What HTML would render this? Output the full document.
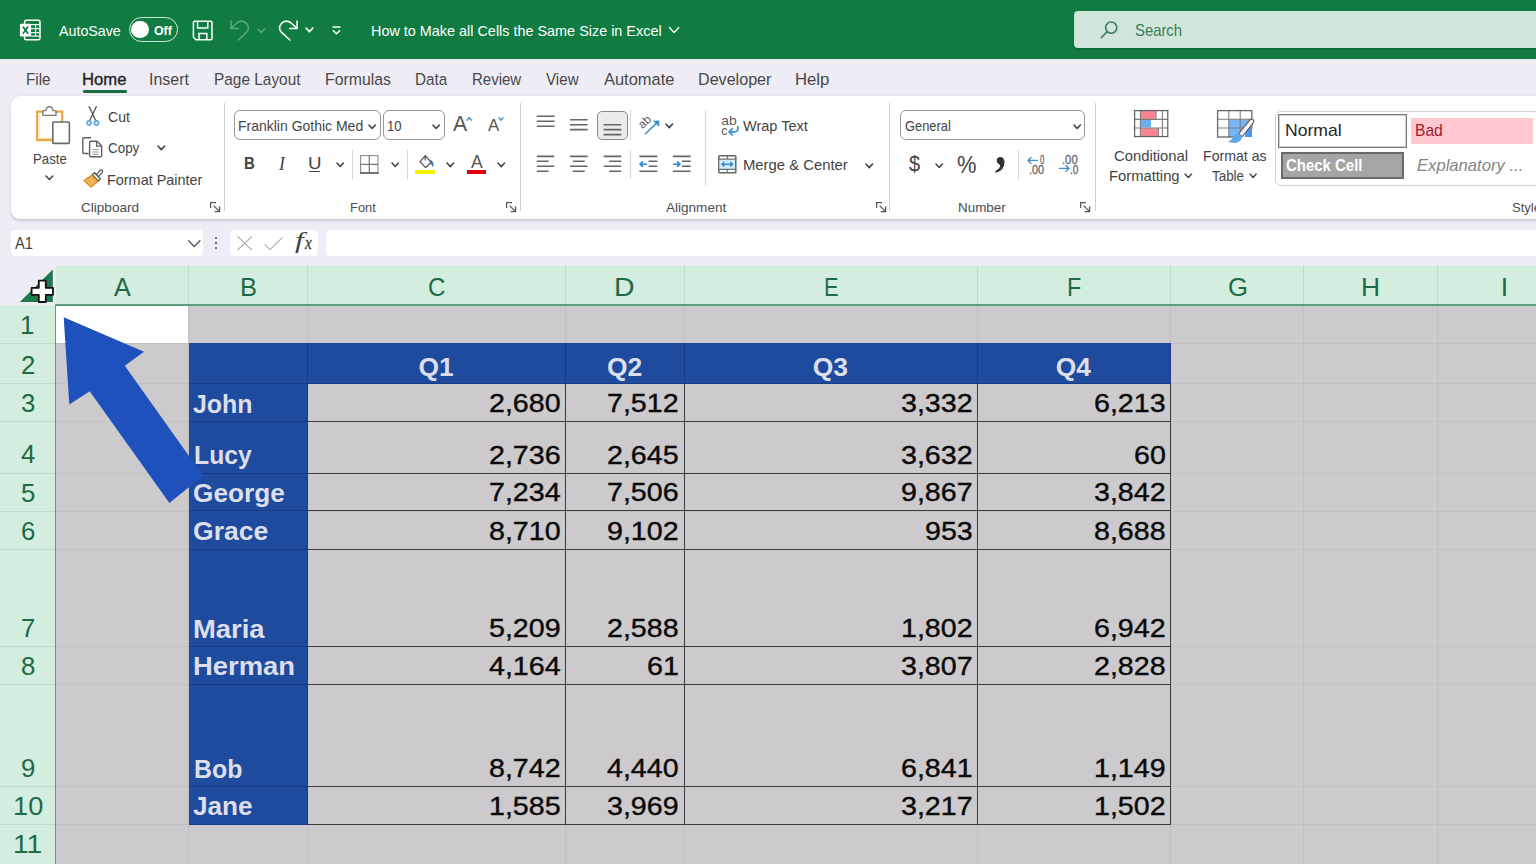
<!DOCTYPE html>
<html><head><meta charset="utf-8"><title>Excel</title>
<style>
html,body{margin:0;padding:0}
body{width:1536px;height:864px;position:relative;overflow:hidden;background:#eeecf5;font-family:"Liberation Sans",sans-serif}
</style></head><body>
<div style="position:absolute;left:0px;top:0px;width:1536px;height:58.5px;background:#107c41"></div>
<svg style="position:absolute;left:18.5px;top:18.5px;overflow:visible;" width="22" height="22" viewBox="0 0 22 22">
<rect x="5.6" y="1.2" width="15.4" height="19.6" rx="1.6" fill="none" stroke="#fff" stroke-width="1.5"/>
<path d="M12 5.6H21M12 9.6H21M12 13.6H21M12 17.2H21M16.6 5.6V17.2" stroke="#e4f3ea" stroke-width="1.2" fill="none"/>
<rect x="0.9" y="4.7" width="11.2" height="12.9" rx="1.1" fill="#fff"/>
<path d="M3.9 7.6L9.1 14.7M9.1 7.6L3.9 14.7" stroke="#107c41" stroke-width="1.7" fill="none"/>
</svg>
<span style="position:absolute;left:59.00px;top:23.63px;font:normal normal 14.5px 'Liberation Sans',sans-serif;line-height:1;color:#ffffff;white-space:pre;transform:scaleX(0.9823);transform-origin:0 0;">AutoSave</span>
<div style="position:absolute;left:128.6px;top:17px;width:49.4px;height:24.6px;box-sizing:border-box;border:1.7px solid rgba(255,255,255,.8);border-radius:13px"></div>
<div style="position:absolute;left:131.4px;top:20.9px;width:17.6px;height:17.6px;background:#fff;border-radius:50%"></div>
<span style="position:absolute;left:153.50px;top:24.30px;font:normal bold 13px 'Liberation Sans',sans-serif;line-height:1;color:#ffffff;white-space:pre;transform:scaleX(0.9516);transform-origin:0 0;">Off</span>
<svg style="position:absolute;left:192px;top:19.6px;overflow:visible;" width="21" height="21" viewBox="0 0 21 21">
<path d="M1.4 2.4Q1.4 1.2 2.6 1.2H18.8Q20 1.2 20 2.4V18.6Q20 19.8 18.8 19.8H4L1.4 17.2Z" fill="none" stroke="#fff" stroke-width="1.5" stroke-linejoin="round"/>
<path d="M5.6 1.2V8H15.8V1.2" fill="none" stroke="#fff" stroke-width="1.5"/>
<path d="M7 19.8V13.6H14.8V19.8" fill="none" stroke="#fff" stroke-width="1.5"/>
</svg>
<svg style="position:absolute;left:229.5px;top:19.5px;overflow:visible;" width="19" height="21" viewBox="0 0 19 21">
<path d="M1 1V8.4H8.4" fill="none" stroke="#58a87f" stroke-width="1.5" stroke-linecap="round" stroke-linejoin="round"/>
<path d="M1.3 8.1L6.6 3.2Q12.2 -1 16.6 3.4Q20.4 8 16.4 12.4L8.1 20" fill="none" stroke="#58a87f" stroke-width="1.5" stroke-linecap="round" stroke-linejoin="round"/>
</svg>
<svg style="position:absolute;left:258.0px;top:28.5px;overflow:visible;" width="6.6" height="3.4" viewBox="0 0 6.6 3.4"><path d="M0 0 L3.3 3.4 L6.6 0" fill="none" stroke="#58a87f" stroke-width="1.4" stroke-linecap="round" stroke-linejoin="round"/></svg>
<svg style="position:absolute;left:278.6px;top:19.5px;overflow:visible;" width="19" height="21" viewBox="0 0 19 21">
<path d="M18 1V8.4H10.6" fill="none" stroke="#fff" stroke-width="1.5" stroke-linecap="round" stroke-linejoin="round"/>
<path d="M17.7 8.1L12.4 3.2Q6.8 -1 2.4 3.4Q-1.4 8 2.6 12.4L10.9 20" fill="none" stroke="#fff" stroke-width="1.5" stroke-linecap="round" stroke-linejoin="round"/>
</svg>
<svg style="position:absolute;left:306.3px;top:28.2px;overflow:visible;" width="6.8" height="3.6" viewBox="0 0 6.8 3.6"><path d="M0 0 L3.4 3.6 L6.8 0" fill="none" stroke="#fff" stroke-width="1.7" stroke-linecap="round" stroke-linejoin="round"/></svg>
<svg style="position:absolute;left:331.5px;top:25.6px;overflow:visible;" width="9" height="9" viewBox="0 0 9 9"><path d="M0.5 1H8.5" stroke="#fff" stroke-width="1.5" fill="none"/><path d="M1 4.2L4.5 7.7L8 4.2" fill="none" stroke="#fff" stroke-width="1.5" stroke-linejoin="round"/></svg>
<span style="position:absolute;left:371.10px;top:24.11px;font:normal normal 14.4px 'Liberation Sans',sans-serif;line-height:1;color:#ffffff;white-space:pre;transform:scaleX(1.0009);transform-origin:0 0;">How to Make all Cells the Same Size in Excel</span>
<svg style="position:absolute;left:669.3px;top:27px;overflow:visible;" width="10.2" height="6.5" viewBox="0 0 10.2 6.5"><path d="M0.5 0.5L5.1 5.6L9.7 0.5" fill="none" stroke="#fff" stroke-width="1.4" stroke-linecap="round" stroke-linejoin="round"/></svg>
<div style="position:absolute;left:1074px;top:10.5px;width:480px;height:37.8px;background:#d0e6da;border-radius:4px;box-shadow:0 1px 2px rgba(0,60,30,.35)"></div>
<svg style="position:absolute;left:1100px;top:19.5px;overflow:visible;" width="19" height="19" viewBox="0 0 19 19"><circle cx="11.2" cy="7.6" r="5.6" fill="none" stroke="#3d7f5e" stroke-width="1.6"/><path d="M7.2 11.6L1.2 17.8" stroke="#3d7f5e" stroke-width="1.6" stroke-linecap="round"/></svg>
<span style="position:absolute;left:1135.30px;top:21.93px;font:normal normal 16.5px 'Liberation Sans',sans-serif;line-height:1;color:#3a7a59;white-space:pre;transform:scaleX(0.9001);transform-origin:0 0;">Search</span>
<span style="position:absolute;left:25.86px;top:71.30px;font:normal normal 16.3px 'Liberation Sans',sans-serif;line-height:1;color:#484848;white-space:pre;transform:scaleX(0.9373);transform-origin:0 0;">File</span>
<span style="position:absolute;left:149.02px;top:71.30px;font:normal normal 16.3px 'Liberation Sans',sans-serif;line-height:1;color:#484848;white-space:pre;transform:scaleX(0.9802);transform-origin:0 0;">Insert</span>
<span style="position:absolute;left:214.05px;top:71.30px;font:normal normal 16.3px 'Liberation Sans',sans-serif;line-height:1;color:#484848;white-space:pre;transform:scaleX(0.9460);transform-origin:0 0;">Page Layout</span>
<span style="position:absolute;left:325.03px;top:71.30px;font:normal normal 16.3px 'Liberation Sans',sans-serif;line-height:1;color:#484848;white-space:pre;transform:scaleX(0.9729);transform-origin:0 0;">Formulas</span>
<span style="position:absolute;left:415.27px;top:71.30px;font:normal normal 16.3px 'Liberation Sans',sans-serif;line-height:1;color:#484848;white-space:pre;transform:scaleX(0.9349);transform-origin:0 0;">Data</span>
<span style="position:absolute;left:472.18px;top:71.30px;font:normal normal 16.3px 'Liberation Sans',sans-serif;line-height:1;color:#484848;white-space:pre;transform:scaleX(0.9216);transform-origin:0 0;">Review</span>
<span style="position:absolute;left:546.20px;top:71.30px;font:normal normal 16.3px 'Liberation Sans',sans-serif;line-height:1;color:#484848;white-space:pre;transform:scaleX(0.9308);transform-origin:0 0;">View</span>
<span style="position:absolute;left:603.70px;top:71.30px;font:normal normal 16.3px 'Liberation Sans',sans-serif;line-height:1;color:#484848;white-space:pre;transform:scaleX(1.0096);transform-origin:0 0;">Automate</span>
<span style="position:absolute;left:698.41px;top:71.30px;font:normal normal 16.3px 'Liberation Sans',sans-serif;line-height:1;color:#484848;white-space:pre;transform:scaleX(0.9893);transform-origin:0 0;">Developer</span>
<span style="position:absolute;left:795.47px;top:71.30px;font:normal normal 16.3px 'Liberation Sans',sans-serif;line-height:1;color:#484848;white-space:pre;transform:scaleX(1.0268);transform-origin:0 0;">Help</span>
<span style="position:absolute;left:82.18px;top:71.30px;font:normal normal 16.3px 'Liberation Sans',sans-serif;line-height:1;color:#252525;white-space:pre;transform:scaleX(1.0242);transform-origin:0 0;-webkit-text-stroke:0.35px #252525;">Home</span>
<div style="position:absolute;left:83px;top:90.3px;width:44.3px;height:2.6px;background:#1b6e44;border-radius:1.3px"></div>
<div style="position:absolute;left:10.5px;top:96px;width:1560px;height:123px;background:#fff;border-radius:9px;box-shadow:0 1.5px 3px rgba(100,100,130,.28)"></div>
<div style="position:absolute;left:223.5px;top:102.5px;width:1px;height:108.5px;background:#cfcfcf"></div>
<div style="position:absolute;left:520.1px;top:102.5px;width:1px;height:108.5px;background:#cfcfcf"></div>
<div style="position:absolute;left:889.0px;top:102.5px;width:1px;height:108.5px;background:#cfcfcf"></div>
<div style="position:absolute;left:1094.5px;top:102.5px;width:1px;height:108.5px;background:#cfcfcf"></div>
<svg style="position:absolute;left:209.5px;top:201.6px;overflow:visible;" width="10.5" height="10.5" viewBox="0 0 10.5 10.5"><path d="M0.6 6V0.6H6" fill="none" stroke="#555" stroke-width="1.2"/><path d="M3.6 3.6L9.4 9.4M9.6 4.6V9.6H4.6" fill="none" stroke="#555" stroke-width="1.3"/></svg>
<svg style="position:absolute;left:506px;top:201.8px;overflow:visible;" width="10.5" height="10.5" viewBox="0 0 10.5 10.5"><path d="M0.6 6V0.6H6" fill="none" stroke="#555" stroke-width="1.2"/><path d="M3.6 3.6L9.4 9.4M9.6 4.6V9.6H4.6" fill="none" stroke="#555" stroke-width="1.3"/></svg>
<svg style="position:absolute;left:875.5px;top:201.8px;overflow:visible;" width="10.5" height="10.5" viewBox="0 0 10.5 10.5"><path d="M0.6 6V0.6H6" fill="none" stroke="#555" stroke-width="1.2"/><path d="M3.6 3.6L9.4 9.4M9.6 4.6V9.6H4.6" fill="none" stroke="#555" stroke-width="1.3"/></svg>
<svg style="position:absolute;left:1080px;top:201.8px;overflow:visible;" width="10.5" height="10.5" viewBox="0 0 10.5 10.5"><path d="M0.6 6V0.6H6" fill="none" stroke="#555" stroke-width="1.2"/><path d="M3.6 3.6L9.4 9.4M9.6 4.6V9.6H4.6" fill="none" stroke="#555" stroke-width="1.3"/></svg>
<svg style="position:absolute;left:36px;top:106px;overflow:visible;" width="34.5" height="38.5" viewBox="0 0 34.5 38.5">
<path d="M7 5.6H1.2V34.2H16.4" fill="none" stroke="#eaa641" stroke-width="2.2"/>
<path d="M19.6 5.6H26.2V15.4" fill="none" stroke="#eaa641" stroke-width="2.2"/>
<path d="M3 7.4V32.4H16" fill="none" stroke="#fbe3b6" stroke-width="1.2"/>
<path d="M6.8 9.4V5.6Q6.8 4.6 7.8 4.6H9.8Q10.6 0.8 13.4 0.8Q16.2 0.8 17 4.6H19Q20 4.6 20 5.6V9.4Z" fill="#fff" stroke="#7a7a7a" stroke-width="1.4" stroke-linejoin="round"/>
<rect x="16.8" y="16" width="16.6" height="21.4" rx="1" fill="#fff" stroke="#6a6a6a" stroke-width="1.6"/>
</svg>
<span style="position:absolute;left:32.89px;top:151.83px;font:normal normal 14.5px 'Liberation Sans',sans-serif;line-height:1;color:#444444;white-space:pre;transform:scaleX(0.9108);transform-origin:0 0;">Paste</span>
<svg style="position:absolute;left:45.9px;top:175.7px;overflow:visible;" width="6.8" height="3.6" viewBox="0 0 6.8 3.6"><path d="M0 0 L3.4 3.6 L6.8 0" fill="none" stroke="#444" stroke-width="1.5" stroke-linecap="round" stroke-linejoin="round"/></svg>
<svg style="position:absolute;left:85.5px;top:106px;overflow:visible;" width="13.5" height="20" viewBox="0 0 13.5 20">
<path d="M3.2 0.6L9.6 14.2M10.3 0.6L3.9 14.2" stroke="#555" stroke-width="1.3" fill="none" stroke-linecap="round"/>
<circle cx="3" cy="16.9" r="2.1" fill="#d9edfb" stroke="#4fa3e0" stroke-width="1.4"/>
<circle cx="10.5" cy="16.9" r="2.1" fill="#d9edfb" stroke="#4fa3e0" stroke-width="1.4"/>
</svg>
<span style="position:absolute;left:107.50px;top:110.13px;font:normal normal 14.5px 'Liberation Sans',sans-serif;line-height:1;color:#444444;white-space:pre;transform:scaleX(0.9718);transform-origin:0 0;">Cut</span>
<svg style="position:absolute;left:82px;top:136.8px;overflow:visible;" width="20.5" height="20.5" viewBox="0 0 20.5 20.5">
<path d="M6.5 16.5H2Q0.8 16.5 0.8 15.3V2Q0.8 0.8 2 0.8H9" fill="none" stroke="#5f5f5f" stroke-width="1.4"/>
<path d="M7.6 5.4Q7.6 4.2 8.8 4.2H15L19.6 8.8V18.5Q19.6 19.7 18.4 19.7H8.8Q7.6 19.7 7.6 18.5Z" fill="#fff" stroke="#5f5f5f" stroke-width="1.4" stroke-linejoin="round"/>
<path d="M14.6 4.4V9.2H19.4" fill="none" stroke="#5f5f5f" stroke-width="1.2"/>
<path d="M10.6 12.6H16.6M10.6 15H16.6M10.6 17.4H16.6" stroke="#888" stroke-width="0.9"/>
</svg>
<span style="position:absolute;left:107.50px;top:140.93px;font:normal normal 14.5px 'Liberation Sans',sans-serif;line-height:1;color:#444444;white-space:pre;transform:scaleX(0.9249);transform-origin:0 0;">Copy</span>
<svg style="position:absolute;left:158.0px;top:146.0px;overflow:visible;" width="6.6" height="3.6" viewBox="0 0 6.6 3.6"><path d="M0 0 L3.3 3.6 L6.6 0" fill="none" stroke="#444" stroke-width="1.6" stroke-linecap="round" stroke-linejoin="round"/></svg>
<svg style="position:absolute;left:82.5px;top:168.5px;overflow:visible;" width="20.5" height="19" viewBox="0 0 20.5 19">
<path d="M13.5 5.6L17.2 1.2Q18.2 0.4 19.2 1.4Q20 2.4 19.2 3.4L15.4 7.6" fill="#fff" stroke="#555" stroke-width="1.3" stroke-linejoin="round"/>
<path d="M9.4 5.6L11.6 3.8L17.4 10L15.2 12Z" fill="#fff" stroke="#555" stroke-width="1.3" stroke-linejoin="round"/>
<path d="M8.8 6.4L1 11.6L8 18L14.6 12.4Z" fill="#f0b45e" stroke="#e08a1e" stroke-width="1.3" stroke-linejoin="round"/>
</svg>
<span style="position:absolute;left:106.81px;top:172.93px;font:normal normal 14.5px 'Liberation Sans',sans-serif;line-height:1;color:#444444;white-space:pre;transform:scaleX(0.9941);transform-origin:0 0;">Format Painter</span>
<span style="position:absolute;left:80.50px;top:200.70px;font:normal normal 13px 'Liberation Sans',sans-serif;line-height:1;color:#4d4d4d;white-space:pre;transform:scaleX(1.0431);transform-origin:0 0;">Clipboard</span>
<div style="position:absolute;left:234.2px;top:110.4px;width:146.6px;height:29.6px;box-sizing:border-box;border:1.4px solid #979797;border-radius:6px;background:#fff"></div>
<span style="position:absolute;left:237.61px;top:119.08px;font:normal normal 14.2px 'Liberation Sans',sans-serif;line-height:1;color:#444444;white-space:pre;transform:scaleX(0.9860);transform-origin:0 0;">Franklin Gothic Med</span>
<svg style="position:absolute;left:368.8px;top:124.65px;overflow:visible;" width="6.4" height="3.5" viewBox="0 0 6.4 3.5"><path d="M0 0 L3.2 3.5 L6.4 0" fill="none" stroke="#444" stroke-width="1.6" stroke-linecap="round" stroke-linejoin="round"/></svg>
<div style="position:absolute;left:383.4px;top:110.4px;width:61.2px;height:29.6px;box-sizing:border-box;border:1.4px solid #979797;border-radius:6px;background:#fff"></div>
<span style="position:absolute;left:386.98px;top:119.08px;font:normal normal 14.2px 'Liberation Sans',sans-serif;line-height:1;color:#444444;white-space:pre;transform:scaleX(0.9201);transform-origin:0 0;">10</span>
<svg style="position:absolute;left:433.3px;top:124.65px;overflow:visible;" width="6.4" height="3.5" viewBox="0 0 6.4 3.5"><path d="M0 0 L3.2 3.5 L6.4 0" fill="none" stroke="#444" stroke-width="1.6" stroke-linecap="round" stroke-linejoin="round"/></svg>
<span style="position:absolute;left:453.00px;top:112.74px;font:normal normal 22.4px 'Liberation Sans',sans-serif;line-height:1;color:#555;white-space:pre;transform:scaleX(0.9467);transform-origin:0 0;">A</span>
<svg style="position:absolute;left:465.6px;top:116.6px;overflow:visible;" width="6.4" height="4" viewBox="0 0 6.4 4"><path d="M0.6 3.6L3.2 0.8L5.8 3.6" fill="none" stroke="#2f84cf" stroke-width="1.3" stroke-linejoin="round"/></svg>
<span style="position:absolute;left:488.00px;top:116.97px;font:normal normal 17.4px 'Liberation Sans',sans-serif;line-height:1;color:#555;white-space:pre;transform:scaleX(0.9667);transform-origin:0 0;">A</span>
<svg style="position:absolute;left:498.3px;top:116.8px;overflow:visible;" width="6" height="3.8" viewBox="0 0 6 3.8"><path d="M0.6 0.4L3 3.2L5.4 0.4" fill="none" stroke="#2f84cf" stroke-width="1.3" stroke-linejoin="round"/></svg>
<span style="position:absolute;left:243.73px;top:155.24px;font:normal bold 17.2px 'Liberation Sans',sans-serif;line-height:1;color:#444;white-space:pre;transform:scaleX(0.8727);transform-origin:0 0;">B</span>
<span style="position:absolute;left:279.46px;top:154.59px;font:italic normal 18.4px 'Liberation Serif',serif;line-height:1;color:#444;white-space:pre;transform:scaleX(0.9625);transform-origin:0 0;">I</span>
<span style="position:absolute;left:307.77px;top:155.85px;font:normal normal 16.6px 'Liberation Sans',sans-serif;line-height:1;color:#444;white-space:pre;transform:scaleX(1.1300);transform-origin:0 0;">U</span>
<div style="position:absolute;left:308.9px;top:171.2px;width:11.4px;height:1.2px;background:#444"></div>
<svg style="position:absolute;left:336.8px;top:163.05px;overflow:visible;" width="6.4" height="3.5" viewBox="0 0 6.4 3.5"><path d="M0 0 L3.2 3.5 L6.4 0" fill="none" stroke="#444" stroke-width="1.6" stroke-linecap="round" stroke-linejoin="round"/></svg>
<div style="position:absolute;left:352.1px;top:150px;width:1px;height:29px;background:#d6d6d6"></div>
<svg style="position:absolute;left:360.3px;top:155px;overflow:visible;" width="18.6" height="18.6" viewBox="0 0 18.6 18.6"><rect x="0.6" y="0.6" width="17.4" height="17.4" fill="none" stroke="#8a8a8a" stroke-width="1.1"/><path d="M9.3 0.6V18M0.6 9.3H18" stroke="#777" stroke-width="1.2"/><path d="M0 18H18.6" stroke="#555" stroke-width="1.4"/></svg>
<svg style="position:absolute;left:391.8px;top:163.05px;overflow:visible;" width="6.4" height="3.5" viewBox="0 0 6.4 3.5"><path d="M0 0 L3.2 3.5 L6.4 0" fill="none" stroke="#444" stroke-width="1.6" stroke-linecap="round" stroke-linejoin="round"/></svg>
<div style="position:absolute;left:407.2px;top:150px;width:1px;height:29px;background:#d6d6d6"></div>
<svg style="position:absolute;left:418.5px;top:154.6px;overflow:visible;" width="16" height="14.5" viewBox="0 0 16 14.5">
<path d="M6.2 0.8L12.2 7.4L6.6 12.6L1 6.6Z" fill="#fff" stroke="#555" stroke-width="1.3" stroke-linejoin="round"/>
<path d="M6.2 0.8V5.5" stroke="#555" stroke-width="1.2"/>
<path d="M11.2 5.2Q14.6 6.2 14 11.4Q12.4 9.4 11.8 7.6" fill="#2f6fb5" stroke="#2f6fb5" stroke-width="0.8"/>
</svg>
<div style="position:absolute;left:415px;top:169.5px;width:20px;height:4.9px;background:#f7f200"></div>
<svg style="position:absolute;left:446.5px;top:163.0px;overflow:visible;" width="6.6" height="3.6" viewBox="0 0 6.6 3.6"><path d="M0 0 L3.3 3.6 L6.6 0" fill="none" stroke="#444" stroke-width="1.6" stroke-linecap="round" stroke-linejoin="round"/></svg>
<span style="position:absolute;left:470.80px;top:152.79px;font:normal normal 18.8px 'Liberation Sans',sans-serif;line-height:1;color:#555;white-space:pre;transform:scaleX(0.9385);transform-origin:0 0;">A</span>
<div style="position:absolute;left:466.8px;top:169.5px;width:19.6px;height:4.9px;background:#e3000f"></div>
<svg style="position:absolute;left:497.9px;top:163.0px;overflow:visible;" width="6.6" height="3.6" viewBox="0 0 6.6 3.6"><path d="M0 0 L3.3 3.6 L6.6 0" fill="none" stroke="#444" stroke-width="1.6" stroke-linecap="round" stroke-linejoin="round"/></svg>
<span style="position:absolute;left:349.61px;top:201.10px;font:normal normal 13px 'Liberation Sans',sans-serif;line-height:1;color:#4d4d4d;white-space:pre;transform:scaleX(0.9921);transform-origin:0 0;">Font</span>
<svg style="position:absolute;left:0px;top:0px;overflow:visible;" width="1" height="1" viewBox="0 0 1 1"><path d="M536.80 116.30H554.60M536.80 121.20H554.60M536.80 126.20H554.60" stroke="#666" stroke-width="1.6" fill="none"/></svg>
<svg style="position:absolute;left:0px;top:0px;overflow:visible;" width="1" height="1" viewBox="0 0 1 1"><path d="M570.00 119.70H587.60M570.00 124.70H587.60M570.00 129.60H587.60" stroke="#666" stroke-width="1.6" fill="none"/></svg>
<div style="position:absolute;left:597.4px;top:111px;width:30.2px;height:28.6px;box-sizing:border-box;border:1px solid #8a8a8a;border-radius:5px;background:#ebebeb"></div>
<svg style="position:absolute;left:0px;top:0px;overflow:visible;" width="1" height="1" viewBox="0 0 1 1"><path d="M603.60 124.70H621.40M603.60 129.60H621.40M603.60 134.60H621.40" stroke="#666" stroke-width="1.6" fill="none"/></svg>
<div style="position:absolute;left:630.3px;top:110px;width:1px;height:29.5px;background:#d6d6d6"></div>
<svg style="position:absolute;left:638.5px;top:115.5px;overflow:visible;" width="20.5" height="19" viewBox="0 0 20.5 19">
<text x="0" y="0" transform="translate(3.4,13.2) rotate(-43)" font-family="Liberation Sans, sans-serif" font-size="11.8" fill="#5a5a5a">ab</text>
<path d="M6.4 17.8L19.4 5.4" fill="none" stroke="#3a8fd0" stroke-width="1.5" stroke-linecap="round"/>
<path d="M14.6 5L19.8 5L19.8 10.2Z" fill="#3a8fd0" stroke="#3a8fd0" stroke-width="0.8" stroke-linejoin="round"/>
</svg>
<svg style="position:absolute;left:666.3000000000001px;top:124.2px;overflow:visible;" width="6.6" height="3.6" viewBox="0 0 6.6 3.6"><path d="M0 0 L3.3 3.6 L6.6 0" fill="none" stroke="#444" stroke-width="1.6" stroke-linecap="round" stroke-linejoin="round"/></svg>
<svg style="position:absolute;left:0px;top:0px;overflow:visible;" width="1" height="1" viewBox="0 0 1 1"><path d="M536.80 156.40H554.20M536.80 161.30H548.63M536.80 166.30H554.20M536.80 171.20H548.63" stroke="#666" stroke-width="1.6" fill="none"/></svg>
<svg style="position:absolute;left:0px;top:0px;overflow:visible;" width="1" height="1" viewBox="0 0 1 1"><path d="M570.00 156.40H587.60M572.82 161.30H584.78M570.00 166.30H587.60M572.82 171.20H584.78" stroke="#666" stroke-width="1.6" fill="none"/></svg>
<svg style="position:absolute;left:0px;top:0px;overflow:visible;" width="1" height="1" viewBox="0 0 1 1"><path d="M603.60 156.40H621.20M609.23 161.30H621.20M603.60 166.30H621.20M609.23 171.20H621.20" stroke="#666" stroke-width="1.6" fill="none"/></svg>
<div style="position:absolute;left:630.3px;top:150px;width:1px;height:29px;background:#d6d6d6"></div>
<svg style="position:absolute;left:0px;top:0px;overflow:visible;" width="1" height="1" viewBox="0 0 1 1"><path d="M639.40 156.40H657.30M639.40 171.20H657.30" stroke="#666" stroke-width="1.6" fill="none"/></svg>
<svg style="position:absolute;left:0px;top:0px;overflow:visible;" width="1" height="1" viewBox="0 0 1 1"><path d="M648.60 161.30H657.30M648.60 166.30H657.30" stroke="#666" stroke-width="1.6" fill="none"/></svg>
<svg style="position:absolute;left:639.4px;top:160.6px;overflow:visible;" width="8" height="6.4" viewBox="0 0 8 6.4"><path d="M7.4 3.2H1M3.4 0.8L0.8 3.2L3.4 5.6Z" fill="#3a8fd0" stroke="#3a8fd0" stroke-width="1.4" stroke-linejoin="round" stroke-linecap="round"/></svg>
<svg style="position:absolute;left:0px;top:0px;overflow:visible;" width="1" height="1" viewBox="0 0 1 1"><path d="M672.80 156.40H690.70M672.80 171.20H690.70" stroke="#666" stroke-width="1.6" fill="none"/></svg>
<svg style="position:absolute;left:0px;top:0px;overflow:visible;" width="1" height="1" viewBox="0 0 1 1"><path d="M682.00 161.30H690.70M682.00 166.30H690.70" stroke="#666" stroke-width="1.6" fill="none"/></svg>
<svg style="position:absolute;left:672.8px;top:160.6px;overflow:visible;" width="8" height="6.4" viewBox="0 0 8 6.4"><path d="M0.6 3.2H7M4.6 0.8L7.2 3.2L4.6 5.6Z" fill="#3a8fd0" stroke="#3a8fd0" stroke-width="1.4" stroke-linejoin="round" stroke-linecap="round"/></svg>
<div style="position:absolute;left:705.0px;top:110px;width:1px;height:76px;background:#d6d6d6"></div>
<svg style="position:absolute;left:720.5px;top:115.5px;overflow:visible;" width="18" height="19.5" viewBox="0 0 18 19.5">
<text x="0.2" y="9.1" font-family="Liberation Sans, sans-serif" font-size="12.4" fill="#5a5a5a" textLength="15.4" lengthAdjust="spacingAndGlyphs">ab</text>
<text x="0.2" y="18.6" font-family="Liberation Sans, sans-serif" font-size="12.4" fill="#5a5a5a">c</text>
<path d="M16.6 10.6Q18 15.6 13.6 15.8H8.6" fill="none" stroke="#3a8fd0" stroke-width="1.7" stroke-linecap="round"/>
<path d="M11.4 12.6L8 15.8L11.4 19" fill="none" stroke="#3a8fd0" stroke-width="1.7" stroke-linejoin="round" stroke-linecap="round"/>
</svg>
<span style="position:absolute;left:743.10px;top:119.43px;font:normal normal 14.5px 'Liberation Sans',sans-serif;line-height:1;color:#444444;white-space:pre;transform:scaleX(1.0019);transform-origin:0 0;">Wrap Text</span>
<svg style="position:absolute;left:718px;top:154.8px;overflow:visible;" width="18.6" height="18.6" viewBox="0 0 18.6 18.6">
<rect x="0.8" y="0.8" width="17" height="17" rx="0.8" fill="#fff" stroke="#666" stroke-width="1.5"/>
<rect x="1.6" y="4.6" width="15.4" height="9.4" fill="#d3ebfb"/>
<path d="M0.8 4.2H17.8M0.8 14.4H17.8M9.3 0.8V4.2M9.3 14.4V17.8" stroke="#6f6f6f" stroke-width="1.2"/>
<path d="M3.6 9.3H15" fill="none" stroke="#3a8fd0" stroke-width="1.5"/>
<path d="M6 6.8L3.4 9.3L6 11.8ZM12.6 6.8L15.2 9.3L12.6 11.8Z" fill="#3a8fd0" stroke="#3a8fd0" stroke-width="0.8" stroke-linejoin="round"/>
</svg>
<span style="position:absolute;left:742.78px;top:158.23px;font:normal normal 14.5px 'Liberation Sans',sans-serif;line-height:1;color:#444444;white-space:pre;transform:scaleX(1.0234);transform-origin:0 0;">Merge &amp; Center</span>
<svg style="position:absolute;left:866.2px;top:163.7px;overflow:visible;" width="6.6" height="3.6" viewBox="0 0 6.6 3.6"><path d="M0 0 L3.3 3.6 L6.6 0" fill="none" stroke="#444" stroke-width="1.6" stroke-linecap="round" stroke-linejoin="round"/></svg>
<span style="position:absolute;left:665.90px;top:200.50px;font:normal normal 13px 'Liberation Sans',sans-serif;line-height:1;color:#4d4d4d;white-space:pre;transform:scaleX(1.0413);transform-origin:0 0;">Alignment</span>
<div style="position:absolute;left:900.2px;top:110.4px;width:185.2px;height:29.6px;box-sizing:border-box;border:1.4px solid #979797;border-radius:6px;background:#fff"></div>
<span style="position:absolute;left:904.70px;top:119.28px;font:normal normal 14.2px 'Liberation Sans',sans-serif;line-height:1;color:#444444;white-space:pre;transform:scaleX(0.9062);transform-origin:0 0;">General</span>
<svg style="position:absolute;left:1074.0px;top:124.65px;overflow:visible;" width="6.4" height="3.5" viewBox="0 0 6.4 3.5"><path d="M0 0 L3.2 3.5 L6.4 0" fill="none" stroke="#444" stroke-width="1.6" stroke-linecap="round" stroke-linejoin="round"/></svg>
<span style="position:absolute;left:909.30px;top:152.72px;font:normal normal 21.6px 'Liberation Sans',sans-serif;line-height:1;color:#444;white-space:pre;transform:scaleX(0.9250);transform-origin:0 0;">$</span>
<svg style="position:absolute;left:936.4px;top:163.65px;overflow:visible;" width="6.4" height="3.5" viewBox="0 0 6.4 3.5"><path d="M0 0 L3.2 3.5 L6.4 0" fill="none" stroke="#444" stroke-width="1.6" stroke-linecap="round" stroke-linejoin="round"/></svg>
<span style="position:absolute;left:956.80px;top:152.81px;font:normal normal 24.2px 'Liberation Sans',sans-serif;line-height:1;color:#444;white-space:pre;transform:scaleX(0.9048);transform-origin:0 0;">%</span>
<span style="position:absolute;left:994.80px;top:121.31px;font:normal bold 53px 'Liberation Serif',serif;line-height:1;color:#333;white-space:pre;transform:scaleX(0.8500);transform-origin:0 0;">,</span>
<div style="position:absolute;left:1018.0px;top:150px;width:1px;height:29px;background:#d6d6d6"></div>
<svg style="position:absolute;left:1026.8px;top:157px;overflow:visible;" width="11" height="7" viewBox="0 0 11 7"><path d="M10.4 3.4H1M4 0.6L1 3.4L4 6.2" fill="none" stroke="#3a8fd0" stroke-width="1.4" stroke-linejoin="round" stroke-linecap="round"/></svg>
<span style="position:absolute;left:1040.10px;top:154.04px;font:normal normal 12px 'Liberation Sans',sans-serif;line-height:1;color:#6a6a6a;white-space:pre;transform:scaleX(0.6571);transform-origin:0 0;-webkit-text-stroke:0.3px #6a6a6a;">0</span>
<span style="position:absolute;left:1029.29px;top:164.04px;font:normal normal 12px 'Liberation Sans',sans-serif;line-height:1;color:#6a6a6a;white-space:pre;transform:scaleX(0.9058);transform-origin:0 0;-webkit-text-stroke:0.3px #6a6a6a;">.00</span>
<span style="position:absolute;left:1062.46px;top:154.04px;font:normal normal 12px 'Liberation Sans',sans-serif;line-height:1;color:#6a6a6a;white-space:pre;transform:scaleX(0.9370);transform-origin:0 0;-webkit-text-stroke:0.3px #6a6a6a;">.00</span>
<svg style="position:absolute;left:1059.4px;top:165.4px;overflow:visible;" width="11" height="7" viewBox="0 0 11 7"><path d="M0.6 3.4H10M7 0.6L10 3.4L7 6.2" fill="none" stroke="#3a8fd0" stroke-width="1.4" stroke-linejoin="round" stroke-linecap="round"/></svg>
<span style="position:absolute;left:1069.76px;top:164.04px;font:normal normal 12px 'Liberation Sans',sans-serif;line-height:1;color:#6a6a6a;white-space:pre;transform:scaleX(0.8357);transform-origin:0 0;-webkit-text-stroke:0.3px #6a6a6a;">.0</span>
<span style="position:absolute;left:958.37px;top:201.10px;font:normal normal 13px 'Liberation Sans',sans-serif;line-height:1;color:#4d4d4d;white-space:pre;transform:scaleX(1.0325);transform-origin:0 0;">Number</span>
<svg style="position:absolute;left:1134px;top:110.2px;overflow:visible;" width="34.4" height="27.2" viewBox="0 0 34.4 27.2">
<rect x="0.6" y="0.6" width="33.2" height="26" fill="#fff"/>
<rect x="6.6" y="0.8" width="15.2" height="8.4" fill="#f8858f"/>
<rect x="6.6" y="10" width="10.4" height="7.4" fill="#6aaef0"/>
<rect x="6.6" y="18.2" width="17.6" height="8.2" fill="#f8858f"/>
<path d="M0.6 9.4H33.8M0.6 18H33.8M6.4 0.6V26.6M22 0.6V9.4M24.4 18V26.6M28.4 0.6V26.6" stroke="#7d7d7d" stroke-width="1.1" fill="none"/>
<rect x="0.6" y="0.6" width="33.2" height="26" fill="none" stroke="#666" stroke-width="1.3"/>
</svg>
<span style="position:absolute;left:1114.00px;top:149.33px;font:normal normal 14.5px 'Liberation Sans',sans-serif;line-height:1;color:#444444;white-space:pre;transform:scaleX(1.0217);transform-origin:0 0;">Conditional</span>
<span style="position:absolute;left:1108.58px;top:169.03px;font:normal normal 14.5px 'Liberation Sans',sans-serif;line-height:1;color:#444444;white-space:pre;transform:scaleX(1.0185);transform-origin:0 0;">Formatting</span>
<svg style="position:absolute;left:1185.3px;top:174.1px;overflow:visible;" width="6.6" height="3.6" viewBox="0 0 6.6 3.6"><path d="M0 0 L3.3 3.6 L6.6 0" fill="none" stroke="#444" stroke-width="1.4" stroke-linecap="round" stroke-linejoin="round"/></svg>
<svg style="position:absolute;left:1217.4px;top:110.2px;overflow:visible;" width="38" height="34" viewBox="0 0 38 34">
<rect x="0.6" y="0.6" width="34.2" height="26.4" fill="#fff"/>
<rect x="12" y="9.4" width="22.8" height="17.6" fill="#76b6f4"/>
<path d="M0.6 9.2H34.8M0.6 18H34.8M11.8 0.6V27M23.2 0.6V27" stroke="#7d7d7d" stroke-width="1.1" fill="none"/>
<rect x="0.6" y="0.6" width="34.2" height="26.4" fill="none" stroke="#666" stroke-width="1.3"/>
<rect x="24" y="19" width="12" height="9" fill="#fff"/>
<rect x="28" y="17" width="7" height="10" fill="#4b97e6"/>
<path d="M35.4 9.4Q37.6 10.6 36.2 12.8L25.2 26.6L21.6 23.8L32.8 10Q34 8.6 35.4 9.4Z" fill="#fff" stroke="#666" stroke-width="1.2" stroke-linejoin="round"/>
<path d="M21.4 23.6L25.2 26.6Q24.6 31.4 19.4 32.8Q14.6 33.6 10.6 31.2Q15 30.4 16.2 27Q17.4 23.4 21.4 23.6Z" fill="#5ea8ee"/>
</svg>
<span style="position:absolute;left:1203.03px;top:149.33px;font:normal normal 14.5px 'Liberation Sans',sans-serif;line-height:1;color:#444444;white-space:pre;transform:scaleX(0.9748);transform-origin:0 0;">Format as</span>
<span style="position:absolute;left:1211.90px;top:169.03px;font:normal normal 14.5px 'Liberation Sans',sans-serif;line-height:1;color:#444444;white-space:pre;transform:scaleX(0.9249);transform-origin:0 0;">Table</span>
<svg style="position:absolute;left:1250.3000000000002px;top:174.15px;overflow:visible;" width="6.2" height="3.5" viewBox="0 0 6.2 3.5"><path d="M0 0 L3.1 3.5 L6.2 0" fill="none" stroke="#444" stroke-width="1.4" stroke-linecap="round" stroke-linejoin="round"/></svg>
<div style="position:absolute;left:1275px;top:111px;width:300px;height:75.2px;box-sizing:border-box;border:1px solid #d2d2d2;border-radius:6px;background:#fff"></div>
<div style="position:absolute;left:1277.6px;top:114.2px;width:129.4px;height:33.6px;box-sizing:border-box;border:1.7px solid #7a7a7a;background:#fff;box-shadow:inset 0 0 0 1px #d0d0d0"></div>
<span style="position:absolute;left:1284.97px;top:122.21px;font:normal normal 17px 'Liberation Sans',sans-serif;line-height:1;color:#262626;white-space:pre;transform:scaleX(1.0338);transform-origin:0 0;">Normal</span>
<div style="position:absolute;left:1411px;top:117.8px;width:122px;height:26.4px;background:#ffc7ce"></div>
<span style="position:absolute;left:1415.48px;top:122.21px;font:normal normal 17px 'Liberation Sans',sans-serif;line-height:1;color:#a01c2c;white-space:pre;transform:scaleX(0.9169);transform-origin:0 0;">Bad</span>
<div style="position:absolute;left:1280.6px;top:152.4px;width:123px;height:26.8px;box-sizing:border-box;border:2.4px solid #6a6a6a;background:#a5a5a5"></div>
<span style="position:absolute;left:1286.00px;top:156.92px;font:normal bold 16.4px 'Liberation Sans',sans-serif;line-height:1;color:#fff;white-space:pre;transform:scaleX(0.9128);transform-origin:0 0;">Check Cell</span>
<span style="position:absolute;left:1416.60px;top:156.51px;font:italic normal 17px 'Liberation Sans',sans-serif;line-height:1;color:#858585;white-space:pre;transform:scaleX(0.9781);transform-origin:0 0;">Explanatory ...</span>
<span style="position:absolute;left:1512.00px;top:201.40px;font:normal normal 13px 'Liberation Sans',sans-serif;line-height:1;color:#4d4d4d;white-space:pre;transform:scaleX(1.0028);transform-origin:0 0;">Styles</span>
<div style="position:absolute;left:10.5px;top:230.4px;width:192.6px;height:26px;background:#fff;border-radius:4px"></div>
<span style="position:absolute;left:15.20px;top:236.16px;font:normal normal 16px 'Liberation Sans',sans-serif;line-height:1;color:#444;white-space:pre;transform:scaleX(0.9201);transform-origin:0 0;">A1</span>
<svg style="position:absolute;left:188px;top:240.2px;overflow:visible;" width="12.6" height="7.6" viewBox="0 0 12.6 7.6"><path d="M0.6 0.6L6.3 6.6L12 0.6" fill="none" stroke="#444" stroke-width="1.3" stroke-linecap="round" stroke-linejoin="round"/></svg>
<div style="position:absolute;left:214.8px;top:236.89999999999998px;width:2.6px;height:2.6px;background:#4a4a4a;border-radius:50%"></div>
<div style="position:absolute;left:214.8px;top:241.89999999999998px;width:2.6px;height:2.6px;background:#4a4a4a;border-radius:50%"></div>
<div style="position:absolute;left:214.8px;top:246.89999999999998px;width:2.6px;height:2.6px;background:#4a4a4a;border-radius:50%"></div>
<div style="position:absolute;left:229.8px;top:230.4px;width:88px;height:26px;background:#fff;border-radius:4px"></div>
<svg style="position:absolute;left:236.5px;top:236px;overflow:visible;" width="15.5" height="14.5" viewBox="0 0 15.5 14.5"><path d="M0.8 0.8L14.6 13.8M14.6 0.8L0.8 13.8" stroke="#b4b4b4" stroke-width="1.2" fill="none" stroke-linecap="round"/></svg>
<svg style="position:absolute;left:264.3px;top:236.5px;overflow:visible;" width="19" height="13.5" viewBox="0 0 19 13.5"><path d="M0.8 7.6L6 12.6L18.2 0.8" stroke="#b4b4b4" stroke-width="1.2" fill="none" stroke-linecap="round" stroke-linejoin="round"/></svg>
<span style="position:absolute;left:295.00px;top:229.54px;font:italic normal 22.4px 'Liberation Serif',serif;line-height:1;color:#444;white-space:pre;transform:scaleX(1.4000);transform-origin:0 0;">f</span>
<span style="position:absolute;left:304.71px;top:234.21px;font:italic normal 18.5px 'Liberation Serif',serif;line-height:1;color:#3a3a3a;white-space:pre;transform:scaleX(0.8100);transform-origin:0 0;-webkit-text-stroke:0.3px #3a3a3a;">x</span>
<div style="position:absolute;left:325.6px;top:230.4px;width:1230px;height:26px;background:#fff;border-radius:4px"></div>
<div style="position:absolute;left:0px;top:305px;width:1536px;height:560px;background:#cccacc"></div>
<div style="position:absolute;left:188.0px;top:305px;width:1px;height:560px;background:#c2c0c2"></div>
<div style="position:absolute;left:306.7px;top:305px;width:1px;height:560px;background:#c2c0c2"></div>
<div style="position:absolute;left:564.8px;top:305px;width:1px;height:560px;background:#c2c0c2"></div>
<div style="position:absolute;left:683.5px;top:305px;width:1px;height:560px;background:#c2c0c2"></div>
<div style="position:absolute;left:976.7px;top:305px;width:1px;height:560px;background:#c2c0c2"></div>
<div style="position:absolute;left:1170.1px;top:305px;width:1px;height:560px;background:#c2c0c2"></div>
<div style="position:absolute;left:1303.0px;top:305px;width:1px;height:560px;background:#c2c0c2"></div>
<div style="position:absolute;left:1436.5px;top:305px;width:1px;height:560px;background:#c2c0c2"></div>
<div style="position:absolute;left:55px;top:342.5px;width:1490px;height:1px;background:#c2c0c2"></div>
<div style="position:absolute;left:55px;top:383.1px;width:1490px;height:1px;background:#c2c0c2"></div>
<div style="position:absolute;left:55px;top:421.3px;width:1490px;height:1px;background:#c2c0c2"></div>
<div style="position:absolute;left:55px;top:472.8px;width:1490px;height:1px;background:#c2c0c2"></div>
<div style="position:absolute;left:55px;top:510.5px;width:1490px;height:1px;background:#c2c0c2"></div>
<div style="position:absolute;left:55px;top:548.7px;width:1490px;height:1px;background:#c2c0c2"></div>
<div style="position:absolute;left:55px;top:646.3px;width:1490px;height:1px;background:#c2c0c2"></div>
<div style="position:absolute;left:55px;top:684.0px;width:1490px;height:1px;background:#c2c0c2"></div>
<div style="position:absolute;left:55px;top:786.3px;width:1490px;height:1px;background:#c2c0c2"></div>
<div style="position:absolute;left:55px;top:823.9px;width:1490px;height:1px;background:#c2c0c2"></div>
<div style="position:absolute;left:55.5px;top:266px;width:1490px;height:38.6px;background:#d3eedf"></div>
<div style="position:absolute;left:188.0px;top:266px;width:1px;height:38.6px;background:#b9dfca"></div>
<div style="position:absolute;left:306.7px;top:266px;width:1px;height:38.6px;background:#b9dfca"></div>
<div style="position:absolute;left:564.8px;top:266px;width:1px;height:38.6px;background:#b9dfca"></div>
<div style="position:absolute;left:683.5px;top:266px;width:1px;height:38.6px;background:#b9dfca"></div>
<div style="position:absolute;left:976.7px;top:266px;width:1px;height:38.6px;background:#b9dfca"></div>
<div style="position:absolute;left:1170.1px;top:266px;width:1px;height:38.6px;background:#b9dfca"></div>
<div style="position:absolute;left:1303.0px;top:266px;width:1px;height:38.6px;background:#b9dfca"></div>
<div style="position:absolute;left:1436.5px;top:266px;width:1px;height:38.6px;background:#b9dfca"></div>
<div style="position:absolute;left:0px;top:305px;width:55px;height:560px;background:#d3eedf"></div>
<div style="position:absolute;left:0px;top:342.5px;width:55px;height:1px;background:#b9dfca"></div>
<div style="position:absolute;left:0px;top:383.1px;width:55px;height:1px;background:#b9dfca"></div>
<div style="position:absolute;left:0px;top:421.3px;width:55px;height:1px;background:#b9dfca"></div>
<div style="position:absolute;left:0px;top:472.8px;width:55px;height:1px;background:#b9dfca"></div>
<div style="position:absolute;left:0px;top:510.5px;width:55px;height:1px;background:#b9dfca"></div>
<div style="position:absolute;left:0px;top:548.7px;width:55px;height:1px;background:#b9dfca"></div>
<div style="position:absolute;left:0px;top:646.3px;width:55px;height:1px;background:#b9dfca"></div>
<div style="position:absolute;left:0px;top:684.0px;width:55px;height:1px;background:#b9dfca"></div>
<div style="position:absolute;left:0px;top:786.3px;width:55px;height:1px;background:#b9dfca"></div>
<div style="position:absolute;left:0px;top:823.9px;width:55px;height:1px;background:#b9dfca"></div>
<div style="position:absolute;left:55px;top:304.2px;width:1490px;height:1.7px;background:#5f9f80"></div>
<div style="position:absolute;left:54.6px;top:304.2px;width:1.6px;height:561px;background:#5f9f80"></div>
<svg style="position:absolute;left:19px;top:269px;overflow:visible;" width="35" height="34" viewBox="0 0 35 34"><path d="M0.8 33L33.8 0.6V33Z" fill="#217a4d"/></svg>
<div style="position:absolute;left:56.2px;top:306px;width:132px;height:36.6px;background:#fff"></div>
<span style="position:absolute;left:114.20px;top:274.38px;font:normal normal 26.6px 'Liberation Sans',sans-serif;line-height:1;color:#1e6a46;white-space:pre;transform:scaleX(0.9444);transform-origin:0 0;">A</span>
<span style="position:absolute;left:239.88px;top:274.38px;font:normal normal 26.6px 'Liberation Sans',sans-serif;line-height:1;color:#1e6a46;white-space:pre;transform:scaleX(0.9600);transform-origin:0 0;">B</span>
<span style="position:absolute;left:428.49px;top:274.38px;font:normal normal 26.6px 'Liberation Sans',sans-serif;line-height:1;color:#1e6a46;white-space:pre;transform:scaleX(0.9111);transform-origin:0 0;">C</span>
<span style="position:absolute;left:614.26px;top:274.38px;font:normal normal 26.6px 'Liberation Sans',sans-serif;line-height:1;color:#1e6a46;white-space:pre;transform:scaleX(1.0688);transform-origin:0 0;">D</span>
<span style="position:absolute;left:823.96px;top:274.38px;font:normal normal 26.6px 'Liberation Sans',sans-serif;line-height:1;color:#1e6a46;white-space:pre;transform:scaleX(0.8200);transform-origin:0 0;">E</span>
<span style="position:absolute;left:1066.74px;top:274.38px;font:normal normal 26.6px 'Liberation Sans',sans-serif;line-height:1;color:#1e6a46;white-space:pre;transform:scaleX(0.8786);transform-origin:0 0;">F</span>
<span style="position:absolute;left:1227.63px;top:274.38px;font:normal normal 26.6px 'Liberation Sans',sans-serif;line-height:1;color:#1e6a46;white-space:pre;transform:scaleX(0.9667);transform-origin:0 0;">G</span>
<span style="position:absolute;left:1360.81px;top:274.38px;font:normal normal 26.6px 'Liberation Sans',sans-serif;line-height:1;color:#1e6a46;white-space:pre;transform:scaleX(0.9938);transform-origin:0 0;">H</span>
<span style="position:absolute;left:1500.80px;top:274.38px;font:normal normal 26.6px 'Liberation Sans',sans-serif;line-height:1;color:#1e6a46;white-space:pre;transform:scaleX(1.0000);transform-origin:0 0;">I</span>
<span style="position:absolute;left:20.24px;top:311.78px;font:normal normal 26.6px 'Liberation Sans',sans-serif;line-height:1;color:#1e6a46;white-space:pre;transform:scaleX(0.9700);transform-origin:0 0;">1</span>
<span style="position:absolute;left:20.73px;top:352.38px;font:normal normal 26.6px 'Liberation Sans',sans-serif;line-height:1;color:#1e6a46;white-space:pre;transform:scaleX(0.9700);transform-origin:0 0;">2</span>
<span style="position:absolute;left:20.73px;top:389.98px;font:normal normal 26.6px 'Liberation Sans',sans-serif;line-height:1;color:#1e6a46;white-space:pre;transform:scaleX(0.9700);transform-origin:0 0;">3</span>
<span style="position:absolute;left:20.73px;top:441.18px;font:normal normal 26.6px 'Liberation Sans',sans-serif;line-height:1;color:#1e6a46;white-space:pre;transform:scaleX(0.9700);transform-origin:0 0;">4</span>
<span style="position:absolute;left:20.73px;top:479.68px;font:normal normal 26.6px 'Liberation Sans',sans-serif;line-height:1;color:#1e6a46;white-space:pre;transform:scaleX(0.9700);transform-origin:0 0;">5</span>
<span style="position:absolute;left:20.73px;top:517.88px;font:normal normal 26.6px 'Liberation Sans',sans-serif;line-height:1;color:#1e6a46;white-space:pre;transform:scaleX(0.9700);transform-origin:0 0;">6</span>
<span style="position:absolute;left:20.73px;top:615.48px;font:normal normal 26.6px 'Liberation Sans',sans-serif;line-height:1;color:#1e6a46;white-space:pre;transform:scaleX(0.9700);transform-origin:0 0;">7</span>
<span style="position:absolute;left:20.73px;top:652.68px;font:normal normal 26.6px 'Liberation Sans',sans-serif;line-height:1;color:#1e6a46;white-space:pre;transform:scaleX(0.9700);transform-origin:0 0;">8</span>
<span style="position:absolute;left:20.73px;top:754.98px;font:normal normal 26.6px 'Liberation Sans',sans-serif;line-height:1;color:#1e6a46;white-space:pre;transform:scaleX(0.9700);transform-origin:0 0;">9</span>
<span style="position:absolute;left:12.75px;top:793.28px;font:normal normal 26.6px 'Liberation Sans',sans-serif;line-height:1;color:#1e6a46;white-space:pre;transform:scaleX(1.0228);transform-origin:0 0;">10</span>
<span style="position:absolute;left:12.69px;top:831.08px;font:normal normal 26.6px 'Liberation Sans',sans-serif;line-height:1;color:#1e6a46;white-space:pre;transform:scaleX(1.0558);transform-origin:0 0;">11</span>
<div style="position:absolute;left:188.5px;top:343px;width:119px;height:481.4px;background:#1e4b9e"></div>
<div style="position:absolute;left:307px;top:343px;width:863.6px;height:40.6px;background:#1e4b9e"></div>
<div style="position:absolute;left:188.5px;top:383px;width:119px;height:1px;background:#173c85"></div>
<div style="position:absolute;left:188.5px;top:421px;width:119px;height:1px;background:#173c85"></div>
<div style="position:absolute;left:188.5px;top:473px;width:119px;height:1px;background:#173c85"></div>
<div style="position:absolute;left:188.5px;top:510px;width:119px;height:1px;background:#173c85"></div>
<div style="position:absolute;left:188.5px;top:549px;width:119px;height:1px;background:#173c85"></div>
<div style="position:absolute;left:188.5px;top:646px;width:119px;height:1px;background:#173c85"></div>
<div style="position:absolute;left:188.5px;top:684px;width:119px;height:1px;background:#173c85"></div>
<div style="position:absolute;left:188.5px;top:786px;width:119px;height:1px;background:#173c85"></div>
<div style="position:absolute;left:188.5px;top:824px;width:119px;height:1px;background:#173c85"></div>
<div style="position:absolute;left:307px;top:343px;width:1px;height:40.6px;background:#173c85"></div>
<div style="position:absolute;left:565px;top:343px;width:1px;height:40.6px;background:#173c85"></div>
<div style="position:absolute;left:684px;top:343px;width:1px;height:40.6px;background:#173c85"></div>
<div style="position:absolute;left:977px;top:343px;width:1px;height:40.6px;background:#173c85"></div>
<div style="position:absolute;left:1170px;top:343px;width:1px;height:40.6px;background:#173c85"></div>
<div style="position:absolute;left:307px;top:343px;width:1px;height:481.4px;background:#173c85"></div>
<div style="position:absolute;left:307.2px;top:383px;width:863.4px;height:1px;background:#3b3b3d"></div>
<div style="position:absolute;left:307.2px;top:421px;width:863.4px;height:1px;background:#3b3b3d"></div>
<div style="position:absolute;left:307.2px;top:473px;width:863.4px;height:1px;background:#3b3b3d"></div>
<div style="position:absolute;left:307.2px;top:510px;width:863.4px;height:1px;background:#3b3b3d"></div>
<div style="position:absolute;left:307.2px;top:549px;width:863.4px;height:1px;background:#3b3b3d"></div>
<div style="position:absolute;left:307.2px;top:646px;width:863.4px;height:1px;background:#3b3b3d"></div>
<div style="position:absolute;left:307.2px;top:684px;width:863.4px;height:1px;background:#3b3b3d"></div>
<div style="position:absolute;left:307.2px;top:786px;width:863.4px;height:1px;background:#3b3b3d"></div>
<div style="position:absolute;left:307.2px;top:824px;width:863.4px;height:1px;background:#3b3b3d"></div>
<div style="position:absolute;left:565px;top:383.6px;width:1px;height:440.8px;background:#3b3b3d"></div>
<div style="position:absolute;left:684px;top:383.6px;width:1px;height:440.8px;background:#3b3b3d"></div>
<div style="position:absolute;left:977px;top:383.6px;width:1px;height:440.8px;background:#3b3b3d"></div>
<div style="position:absolute;left:1170px;top:383.6px;width:1px;height:440.8px;background:#3b3b3d"></div>
<div style="position:absolute;left:307.8px;top:383px;width:862px;height:1px;background:#173c85"></div>
<span style="position:absolute;left:418.49px;top:353.55px;font:normal bold 26.4px 'Liberation Sans',sans-serif;line-height:1;color:#dcdfe9;white-space:pre;transform:scaleX(1.0000);transform-origin:0 0;">Q1</span>
<span style="position:absolute;left:606.89px;top:353.55px;font:normal bold 26.4px 'Liberation Sans',sans-serif;line-height:1;color:#dcdfe9;white-space:pre;transform:scaleX(1.0000);transform-origin:0 0;">Q2</span>
<span style="position:absolute;left:812.84px;top:353.55px;font:normal bold 26.4px 'Liberation Sans',sans-serif;line-height:1;color:#dcdfe9;white-space:pre;transform:scaleX(1.0000);transform-origin:0 0;">Q3</span>
<span style="position:absolute;left:1055.64px;top:353.55px;font:normal bold 26.4px 'Liberation Sans',sans-serif;line-height:1;color:#dcdfe9;white-space:pre;transform:scaleX(1.0000);transform-origin:0 0;">Q4</span>
<span style="position:absolute;left:193.10px;top:390.55px;font:normal bold 26.4px 'Liberation Sans',sans-serif;line-height:1;color:#dcdfe9;white-space:pre;transform:scaleX(0.9448);transform-origin:0 0;">John</span>
<span style="position:absolute;left:489.28px;top:390.24px;font:normal normal 26.3px 'Liberation Sans',sans-serif;line-height:1;color:#0a0a0a;white-space:pre;transform:scaleX(1.0880);transform-origin:0 0;-webkit-text-stroke:0.4px #0a0a0a;">2,680</span>
<span style="position:absolute;left:607.28px;top:390.24px;font:normal normal 26.3px 'Liberation Sans',sans-serif;line-height:1;color:#0a0a0a;white-space:pre;transform:scaleX(1.0880);transform-origin:0 0;-webkit-text-stroke:0.4px #0a0a0a;">7,512</span>
<span style="position:absolute;left:900.88px;top:390.24px;font:normal normal 26.3px 'Liberation Sans',sans-serif;line-height:1;color:#0a0a0a;white-space:pre;transform:scaleX(1.0880);transform-origin:0 0;-webkit-text-stroke:0.4px #0a0a0a;">3,332</span>
<span style="position:absolute;left:1094.48px;top:390.24px;font:normal normal 26.3px 'Liberation Sans',sans-serif;line-height:1;color:#0a0a0a;white-space:pre;transform:scaleX(1.0880);transform-origin:0 0;-webkit-text-stroke:0.4px #0a0a0a;">6,213</span>
<span style="position:absolute;left:193.56px;top:442.05px;font:normal bold 26.4px 'Liberation Sans',sans-serif;line-height:1;color:#dcdfe9;white-space:pre;transform:scaleX(0.9390);transform-origin:0 0;">Lucy</span>
<span style="position:absolute;left:489.28px;top:441.74px;font:normal normal 26.3px 'Liberation Sans',sans-serif;line-height:1;color:#0a0a0a;white-space:pre;transform:scaleX(1.0880);transform-origin:0 0;-webkit-text-stroke:0.4px #0a0a0a;">2,736</span>
<span style="position:absolute;left:607.28px;top:441.74px;font:normal normal 26.3px 'Liberation Sans',sans-serif;line-height:1;color:#0a0a0a;white-space:pre;transform:scaleX(1.0880);transform-origin:0 0;-webkit-text-stroke:0.4px #0a0a0a;">2,645</span>
<span style="position:absolute;left:900.88px;top:441.74px;font:normal normal 26.3px 'Liberation Sans',sans-serif;line-height:1;color:#0a0a0a;white-space:pre;transform:scaleX(1.0880);transform-origin:0 0;-webkit-text-stroke:0.4px #0a0a0a;">3,632</span>
<span style="position:absolute;left:1134.26px;top:441.74px;font:normal normal 26.3px 'Liberation Sans',sans-serif;line-height:1;color:#0a0a0a;white-space:pre;transform:scaleX(1.0880);transform-origin:0 0;-webkit-text-stroke:0.4px #0a0a0a;">60</span>
<span style="position:absolute;left:192.71px;top:479.75px;font:normal bold 26.4px 'Liberation Sans',sans-serif;line-height:1;color:#dcdfe9;white-space:pre;transform:scaleX(0.9932);transform-origin:0 0;">George</span>
<span style="position:absolute;left:489.28px;top:479.44px;font:normal normal 26.3px 'Liberation Sans',sans-serif;line-height:1;color:#0a0a0a;white-space:pre;transform:scaleX(1.0880);transform-origin:0 0;-webkit-text-stroke:0.4px #0a0a0a;">7,234</span>
<span style="position:absolute;left:607.28px;top:479.44px;font:normal normal 26.3px 'Liberation Sans',sans-serif;line-height:1;color:#0a0a0a;white-space:pre;transform:scaleX(1.0880);transform-origin:0 0;-webkit-text-stroke:0.4px #0a0a0a;">7,506</span>
<span style="position:absolute;left:900.88px;top:479.44px;font:normal normal 26.3px 'Liberation Sans',sans-serif;line-height:1;color:#0a0a0a;white-space:pre;transform:scaleX(1.0880);transform-origin:0 0;-webkit-text-stroke:0.4px #0a0a0a;">9,867</span>
<span style="position:absolute;left:1094.48px;top:479.44px;font:normal normal 26.3px 'Liberation Sans',sans-serif;line-height:1;color:#0a0a0a;white-space:pre;transform:scaleX(1.0880);transform-origin:0 0;-webkit-text-stroke:0.4px #0a0a0a;">3,842</span>
<span style="position:absolute;left:192.69px;top:517.95px;font:normal bold 26.4px 'Liberation Sans',sans-serif;line-height:1;color:#dcdfe9;white-space:pre;transform:scaleX(1.0061);transform-origin:0 0;">Grace</span>
<span style="position:absolute;left:489.28px;top:517.64px;font:normal normal 26.3px 'Liberation Sans',sans-serif;line-height:1;color:#0a0a0a;white-space:pre;transform:scaleX(1.0880);transform-origin:0 0;-webkit-text-stroke:0.4px #0a0a0a;">8,710</span>
<span style="position:absolute;left:607.28px;top:517.64px;font:normal normal 26.3px 'Liberation Sans',sans-serif;line-height:1;color:#0a0a0a;white-space:pre;transform:scaleX(1.0880);transform-origin:0 0;-webkit-text-stroke:0.4px #0a0a0a;">9,102</span>
<span style="position:absolute;left:924.74px;top:517.64px;font:normal normal 26.3px 'Liberation Sans',sans-serif;line-height:1;color:#0a0a0a;white-space:pre;transform:scaleX(1.0880);transform-origin:0 0;-webkit-text-stroke:0.4px #0a0a0a;">953</span>
<span style="position:absolute;left:1094.48px;top:517.64px;font:normal normal 26.3px 'Liberation Sans',sans-serif;line-height:1;color:#0a0a0a;white-space:pre;transform:scaleX(1.0880);transform-origin:0 0;-webkit-text-stroke:0.4px #0a0a0a;">8,688</span>
<span style="position:absolute;left:193.46px;top:615.55px;font:normal bold 26.4px 'Liberation Sans',sans-serif;line-height:1;color:#dcdfe9;white-space:pre;transform:scaleX(1.0386);transform-origin:0 0;">Maria</span>
<span style="position:absolute;left:489.28px;top:615.24px;font:normal normal 26.3px 'Liberation Sans',sans-serif;line-height:1;color:#0a0a0a;white-space:pre;transform:scaleX(1.0880);transform-origin:0 0;-webkit-text-stroke:0.4px #0a0a0a;">5,209</span>
<span style="position:absolute;left:607.28px;top:615.24px;font:normal normal 26.3px 'Liberation Sans',sans-serif;line-height:1;color:#0a0a0a;white-space:pre;transform:scaleX(1.0880);transform-origin:0 0;-webkit-text-stroke:0.4px #0a0a0a;">2,588</span>
<span style="position:absolute;left:900.88px;top:615.24px;font:normal normal 26.3px 'Liberation Sans',sans-serif;line-height:1;color:#0a0a0a;white-space:pre;transform:scaleX(1.0880);transform-origin:0 0;-webkit-text-stroke:0.4px #0a0a0a;">1,802</span>
<span style="position:absolute;left:1094.48px;top:615.24px;font:normal normal 26.3px 'Liberation Sans',sans-serif;line-height:1;color:#0a0a0a;white-space:pre;transform:scaleX(1.0880);transform-origin:0 0;-webkit-text-stroke:0.4px #0a0a0a;">6,942</span>
<span style="position:absolute;left:193.46px;top:653.25px;font:normal bold 26.4px 'Liberation Sans',sans-serif;line-height:1;color:#dcdfe9;white-space:pre;transform:scaleX(1.0390);transform-origin:0 0;">Herman</span>
<span style="position:absolute;left:489.28px;top:652.94px;font:normal normal 26.3px 'Liberation Sans',sans-serif;line-height:1;color:#0a0a0a;white-space:pre;transform:scaleX(1.0880);transform-origin:0 0;-webkit-text-stroke:0.4px #0a0a0a;">4,164</span>
<span style="position:absolute;left:647.06px;top:652.94px;font:normal normal 26.3px 'Liberation Sans',sans-serif;line-height:1;color:#0a0a0a;white-space:pre;transform:scaleX(1.0880);transform-origin:0 0;-webkit-text-stroke:0.4px #0a0a0a;">61</span>
<span style="position:absolute;left:900.88px;top:652.94px;font:normal normal 26.3px 'Liberation Sans',sans-serif;line-height:1;color:#0a0a0a;white-space:pre;transform:scaleX(1.0880);transform-origin:0 0;-webkit-text-stroke:0.4px #0a0a0a;">3,807</span>
<span style="position:absolute;left:1094.48px;top:652.94px;font:normal normal 26.3px 'Liberation Sans',sans-serif;line-height:1;color:#0a0a0a;white-space:pre;transform:scaleX(1.0880);transform-origin:0 0;-webkit-text-stroke:0.4px #0a0a0a;">2,828</span>
<span style="position:absolute;left:193.56px;top:755.55px;font:normal bold 26.4px 'Liberation Sans',sans-serif;line-height:1;color:#dcdfe9;white-space:pre;transform:scaleX(0.9426);transform-origin:0 0;">Bob</span>
<span style="position:absolute;left:489.28px;top:755.24px;font:normal normal 26.3px 'Liberation Sans',sans-serif;line-height:1;color:#0a0a0a;white-space:pre;transform:scaleX(1.0880);transform-origin:0 0;-webkit-text-stroke:0.4px #0a0a0a;">8,742</span>
<span style="position:absolute;left:607.28px;top:755.24px;font:normal normal 26.3px 'Liberation Sans',sans-serif;line-height:1;color:#0a0a0a;white-space:pre;transform:scaleX(1.0880);transform-origin:0 0;-webkit-text-stroke:0.4px #0a0a0a;">4,440</span>
<span style="position:absolute;left:900.88px;top:755.24px;font:normal normal 26.3px 'Liberation Sans',sans-serif;line-height:1;color:#0a0a0a;white-space:pre;transform:scaleX(1.0880);transform-origin:0 0;-webkit-text-stroke:0.4px #0a0a0a;">6,841</span>
<span style="position:absolute;left:1094.48px;top:755.24px;font:normal normal 26.3px 'Liberation Sans',sans-serif;line-height:1;color:#0a0a0a;white-space:pre;transform:scaleX(1.0880);transform-origin:0 0;-webkit-text-stroke:0.4px #0a0a0a;">1,149</span>
<span style="position:absolute;left:192.90px;top:793.15px;font:normal bold 26.4px 'Liberation Sans',sans-serif;line-height:1;color:#dcdfe9;white-space:pre;transform:scaleX(0.9903);transform-origin:0 0;">Jane</span>
<span style="position:absolute;left:489.28px;top:792.84px;font:normal normal 26.3px 'Liberation Sans',sans-serif;line-height:1;color:#0a0a0a;white-space:pre;transform:scaleX(1.0880);transform-origin:0 0;-webkit-text-stroke:0.4px #0a0a0a;">1,585</span>
<span style="position:absolute;left:607.28px;top:792.84px;font:normal normal 26.3px 'Liberation Sans',sans-serif;line-height:1;color:#0a0a0a;white-space:pre;transform:scaleX(1.0880);transform-origin:0 0;-webkit-text-stroke:0.4px #0a0a0a;">3,969</span>
<span style="position:absolute;left:900.88px;top:792.84px;font:normal normal 26.3px 'Liberation Sans',sans-serif;line-height:1;color:#0a0a0a;white-space:pre;transform:scaleX(1.0880);transform-origin:0 0;-webkit-text-stroke:0.4px #0a0a0a;">3,217</span>
<span style="position:absolute;left:1094.48px;top:792.84px;font:normal normal 26.3px 'Liberation Sans',sans-serif;line-height:1;color:#0a0a0a;white-space:pre;transform:scaleX(1.0880);transform-origin:0 0;-webkit-text-stroke:0.4px #0a0a0a;">1,502</span>
<svg style="position:absolute;left:0px;top:0px;overflow:visible;" width="1536" height="864" viewBox="0 0 1536 864"><path d="M63.7 317.3L144 351.7L124.8 365.8L203 475.8L169.4 503L89.7 391.2L69.3 404.5Z" fill="#1f51bd"/></svg>
<svg style="position:absolute;left:29.8px;top:278.8px;overflow:visible;" width="24.6" height="24.6" viewBox="0 0 24.6 24.6"><path d="M8.8 1.6H15.8V8.8H23V15.8H15.8V23H8.8V15.8H1.6V8.8H8.8Z" fill="#fff" stroke="#111" stroke-width="1.8" stroke-linejoin="round"/></svg>
</body></html>
